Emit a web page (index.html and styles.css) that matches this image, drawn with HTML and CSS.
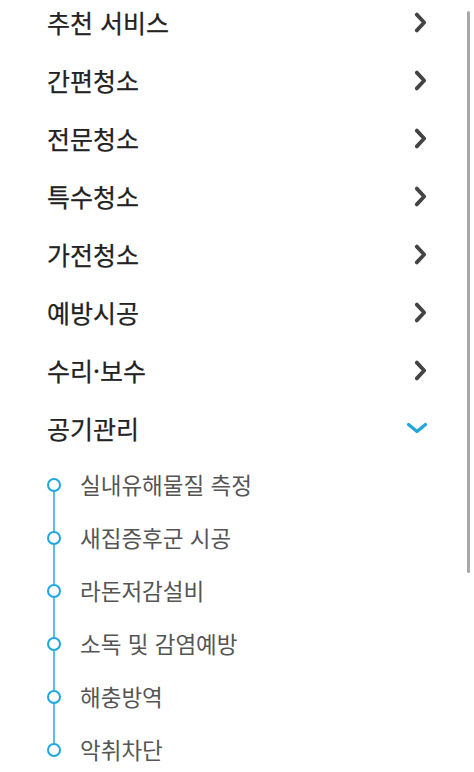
FILE: index.html
```html
<!DOCTYPE html>
<html lang="ko">
<head>
<meta charset="utf-8">
<link rel="stylesheet" href="styles.css">
</head>
<body>
<ul class="menu">
  <li class="row"><span class="label">추천 서비스</span><svg class="chev" viewBox="0 0 12 20"><path d="M2.5 2.5 L9.5 10 L2.5 17.5"/></svg></li>
  <li class="row"><span class="label">간편청소</span><svg class="chev" viewBox="0 0 12 20"><path d="M2.5 2.5 L9.5 10 L2.5 17.5"/></svg></li>
  <li class="row"><span class="label">전문청소</span><svg class="chev" viewBox="0 0 12 20"><path d="M2.5 2.5 L9.5 10 L2.5 17.5"/></svg></li>
  <li class="row"><span class="label">특수청소</span><svg class="chev" viewBox="0 0 12 20"><path d="M2.5 2.5 L9.5 10 L2.5 17.5"/></svg></li>
  <li class="row"><span class="label">가전청소</span><svg class="chev" viewBox="0 0 12 20"><path d="M2.5 2.5 L9.5 10 L2.5 17.5"/></svg></li>
  <li class="row"><span class="label">예방시공</span><svg class="chev" viewBox="0 0 12 20"><path d="M2.5 2.5 L9.5 10 L2.5 17.5"/></svg></li>
  <li class="row"><span class="label">수리·보수</span><svg class="chev" viewBox="0 0 12 20"><path d="M2.5 2.5 L9.5 10 L2.5 17.5"/></svg></li>
  <li class="row open"><span class="label">공기관리</span><svg class="chev-down" viewBox="0 0 22 12"><path d="M2.5 2.5 L11 9.5 L19.5 2.5"/></svg></li>
  <li class="subs">
    <ul class="sublist">
      <li class="sub"><span class="dot"></span><span class="sublabel">실내유해물질 측정</span></li>
      <li class="sub"><span class="dot"></span><span class="sublabel">새집증후군 시공</span></li>
      <li class="sub"><span class="dot"></span><span class="sublabel">라돈저감설비</span></li>
      <li class="sub"><span class="dot"></span><span class="sublabel">소독 및 감염예방</span></li>
      <li class="sub"><span class="dot"></span><span class="sublabel">해충방역</span></li>
      <li class="sub"><span class="dot"></span><span class="sublabel">악취차단</span></li>
    </ul>
  </li>
</ul>
<div class="scrollbar"></div>
</body>
</html>
```
FILE: styles.css
```css
html, body {
  margin: 0;
  padding: 0;
  background: #ffffff;
  overflow: hidden;
}
body {
  font-family: "Noto Sans CJK KR", "Noto Sans", sans-serif;
  width: 474px;
  height: 772px;
}
ul {
  list-style: none;
  margin: 0;
  padding: 0;
}
.menu {
  margin-top: -7px;
  padding: 0 47px 0 47px;
}
.row {
  height: 58px;
  display: flex;
  align-items: center;
  justify-content: space-between;
}
.label {
  font-size: 25px;
  font-weight: 400;
  color: #222222;
  -webkit-text-stroke: 0.25px #222222;
  line-height: 1;
}
.chev {
  width: 13px;
  height: 21px;
}
.chev path {
  fill: none;
  stroke: #444444;
  stroke-width: 3.6;
  stroke-linecap: round;
  stroke-linejoin: round;
}
.chev-down {
  width: 22px;
  height: 12px;
  margin-right: -1px;
}
.chev-down path {
  fill: none;
  stroke: #1ea6dd;
  stroke-width: 3.2;
  stroke-linecap: round;
  stroke-linejoin: round;
}
.subs {
  padding-top: 1px;
}
.sub {
  position: relative;
  height: 53px;
  display: flex;
  align-items: center;
}
.sub::before {
  content: "";
  position: absolute;
  left: 6px;
  top: 26px;
  width: 2px;
  height: 53px;
  background: #5bbde8;
}
.sub:last-child::before {
  display: none;
}
.dot {
  position: relative;
  z-index: 1;
  box-sizing: border-box;
  width: 14px;
  height: 14px;
  border: 2.8px solid #1ea6dd;
  border-radius: 50%;
  background: #ffffff;
  flex: none;
}
.sublabel {
  margin-left: 19px;
  font-size: 22.5px;
  color: #555555;
  line-height: 1;
}
.scrollbar {
  position: fixed;
  left: 467px;
  top: 11px;
  width: 3px;
  height: 562px;
  border-radius: 2px;
  background: #a9a9a9;
}
```
